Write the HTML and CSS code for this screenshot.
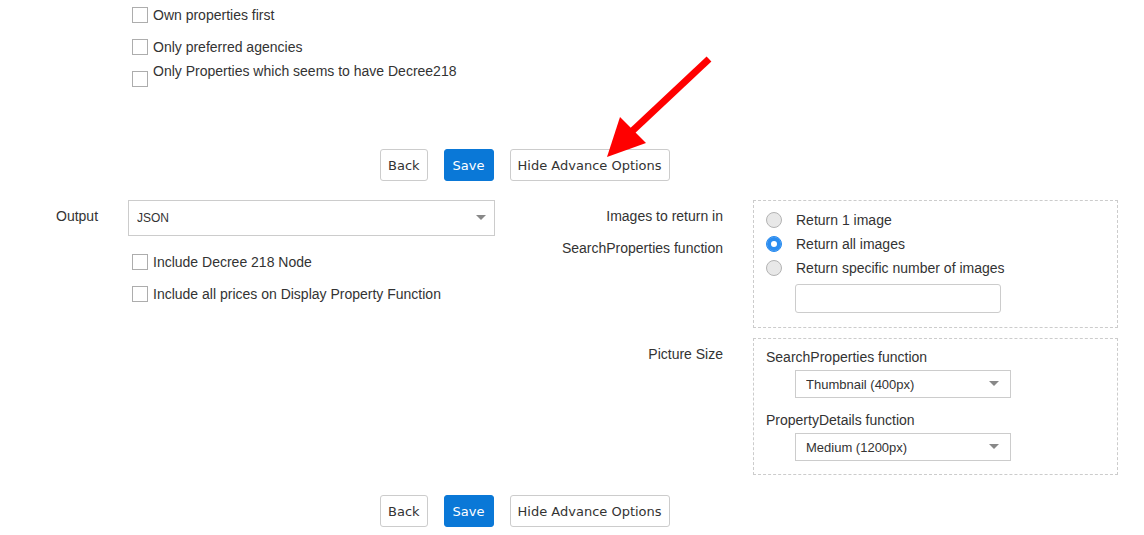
FILE: index.html
```html
<!DOCTYPE html>
<html lang="en">
<head>
    <meta charset="UTF-8">
    <meta name="viewport" content="width=device-width, initial-scale=1.0">
    <title>Search Settings</title>
    <link rel="stylesheet" href="styles.css">
</head>
<body>

<div class="page">
  <div class="advanced">
    <label class="check"><input type="checkbox"><span>Own properties first</span></label>
    <label class="check"><input type="checkbox"><span>Only preferred agencies</span></label>
    <label class="check check-top"><input type="checkbox"><span>Only Properties which seems to have Decree218</span></label>
  </div>

  <div class="actions">
    <button class="btn">Back</button>
    <button class="btn btn-primary">Save</button>
    <button class="btn btn-toggle">Hide Advance Options</button>
  </div>

  <div class="settings">
    <div class="settings-left">
      <div class="field">
        <span class="field-label">Output</span>
        <div class="select select-wide">
          <select><option>JSON</option><option>XML</option></select>
        </div>
      </div>
      <label class="check"><input type="checkbox"><span>Include Decree 218 Node</span></label>
      <label class="check"><input type="checkbox"><span>Include all prices on Display Property Function</span></label>
    </div>

    <div class="settings-right">
      <div class="group">
        <div class="group-label">Images to return in<br>SearchProperties function</div>
        <div class="group-box">
          <label class="radio"><input type="radio" name="images"><span>Return 1 image</span></label>
          <label class="radio"><input type="radio" name="images" checked><span>Return all images</span></label>
          <label class="radio"><input type="radio" name="images"><span>Return specific number of images</span></label>
          <input type="text" class="text-input">
        </div>
      </div>

      <div class="group">
        <div class="group-label">Picture Size</div>
        <div class="group-box group-box-sizes">
          <div class="sub-label">SearchProperties function</div>
          <div class="select select-small">
            <select><option>Thumbnail (400px)</option><option>Medium (1200px)</option></select>
          </div>
          <div class="sub-label">PropertyDetails function</div>
          <div class="select select-small">
            <select><option>Medium (1200px)</option><option>Thumbnail (400px)</option></select>
          </div>
        </div>
      </div>
    </div>
  </div>

  <div class="actions actions-bottom">
    <button class="btn">Back</button>
    <button class="btn btn-primary">Save</button>
    <button class="btn btn-toggle">Hide Advance Options</button>
  </div>

  <!-- annotation arrow pointing at the toggle button -->
  <svg class="annotation" width="1144" height="535" viewBox="0 0 1144 535">
    <line x1="709" y1="59" x2="628" y2="135" stroke="#ff0000" stroke-width="7"/>
    <polygon points="607,157 620,117 646,143" fill="#ff0000"/>
  </svg>
</div>

</body>
</html>
```

FILE: styles.css
```css
:root {
    --border-color: #cccccc;
    --primary-color: #0a78d7;
    --text-color: #333333;
}

body {
    margin: 0;
    font-family: "Liberation Sans", Arial, sans-serif;
    font-size: 14px;
    color: var(--text-color);
    background: #ffffff;
}

.page {
    position: relative;
    width: 1144px;
    height: 535px;
    overflow: hidden;
}

/* checkboxes */
.check {
    display: flex;
    align-items: center;
    height: 16px;
    margin-bottom: 16px;
    line-height: 16px;
}
.check input {
    appearance: none;
    -webkit-appearance: none;
    width: 16px;
    height: 16px;
    margin: 0 5px 0 0;
    border: 1px solid #adadad;
    background: #fff;
    flex-shrink: 0;
}
.check-top {
    align-items: flex-start;
}
.check-top span {
    margin-top: -8px;
}

.advanced {
    padding: 7px 0 0 132px;
}
.advanced .check:last-child {
    margin-bottom: 0;
}

/* buttons */
.actions {
    display: flex;
    gap: 16px;
    padding-left: 380px;
    margin-top: 62px;
}
.actions-bottom {
    margin-top: 20px;
}
.btn {
    height: 32px;
    padding: 0 7px;
    font-family: "DejaVu Sans", Verdana, sans-serif;
    font-size: 13px;
    color: var(--text-color);
    background: #fff;
    border: 1px solid var(--border-color);
    border-radius: 3px;
}
.btn-primary {
    width: 50px;
    padding: 0;
    background: var(--primary-color);
    border-color: var(--primary-color);
    color: #fff;
}
.btn-toggle {
    width: 160px;
    padding: 0;
}

/* settings area */
.settings {
    display: flex;
    margin-top: 19px;
}
.settings-left {
    width: 484px;
    padding-left: 56px;
}
.field {
    display: flex;
    margin-bottom: 18px;
}
.field-label {
    width: 72px;
    line-height: 32px;
}
.settings-left .check {
    margin-left: 76px;
}

.select {
    position: relative;
}
.select select {
    appearance: none;
    -webkit-appearance: none;
    width: 100%;
    height: 100%;
    font-family: "Liberation Sans", Arial, sans-serif;
    color: var(--text-color);
    background: #fff;
    border: 1px solid var(--border-color);
    border-radius: 0;
    outline: none;
}
.select::after {
    content: "";
    position: absolute;
    top: 50%;
    margin-top: -3px;
    border-left: 5px solid transparent;
    border-right: 5px solid transparent;
    border-top: 5px solid #888;
    pointer-events: none;
}
.select-wide {
    width: 367px;
    height: 36px;
}
.select-wide select {
    padding-left: 8px;
    font-size: 12px;
}
.select-wide::after {
    right: 9px;
}
.select-small {
    width: 216px;
    height: 28px;
    margin: 3px 0 0 29px;
}
.select-small select {
    padding-left: 10px;
    font-size: 13px;
}
.select-small::after {
    right: 12px;
}

.group {
    display: flex;
    gap: 30px;
    margin-bottom: 10px;
}
.group:last-child {
    margin-bottom: 0;
}
.group-label {
    width: 183px;
    text-align: right;
    line-height: 32px;
}
.group-box {
    width: 339px;
    padding: 7px 12px 14px;
    border: 1px dashed var(--border-color);
}
.group-box-sizes {
    padding: 8px 12px 13px;
}
.sub-label {
    line-height: 20px;
}
.sub-label + .select + .sub-label {
    margin-top: 12px;
}

/* radios */
.radio {
    display: flex;
    align-items: center;
    height: 24px;
}
.radio input {
    appearance: none;
    -webkit-appearance: none;
    width: 16px;
    height: 16px;
    margin: 0 14px 0 0;
    border: 1px solid #b3b3b3;
    border-radius: 50%;
    background: #e8e8e8;
}
.radio input:checked {
    border-color: #2a8cf0;
    background: #2a8cf0;
    box-shadow: inset 0 0 0 4px #2a8cf0, inset 0 0 0 8px #ffffff;
}
.text-input {
    display: block;
    width: 206px;
    height: 29px;
    box-sizing: border-box;
    margin: 4px 0 0 29px;
    border: 1px solid var(--border-color);
    border-radius: 3px;
}

.annotation {
    position: absolute;
    top: 0;
    left: 0;
    pointer-events: none;
}
```
